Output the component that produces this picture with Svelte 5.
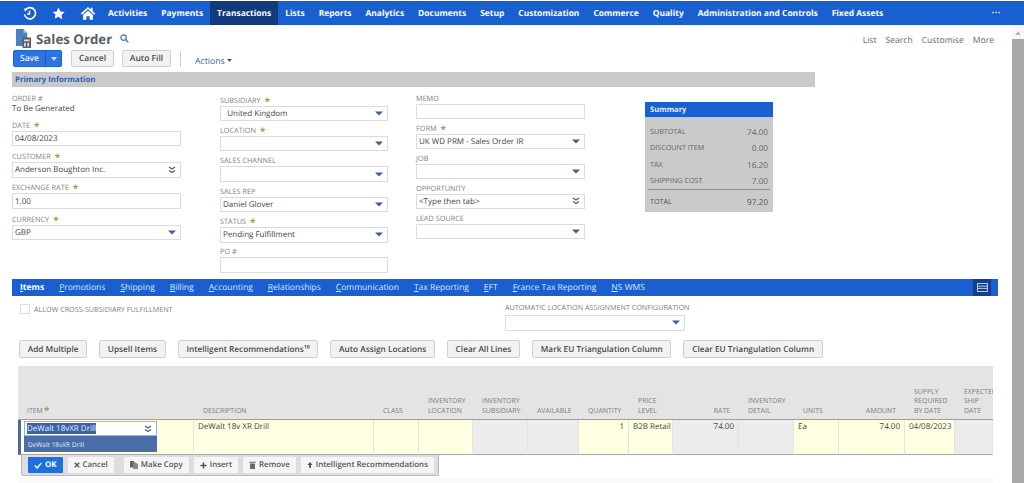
<script lang="ts">
  const navItems = ["Activities", "Payments", "Transactions", "Lists", "Reports", "Analytics", "Documents", "Setup", "Customization", "Commerce", "Quality", "Administration and Controls", "Fixed Assets"];
  const tabs = ["Items", "Promotions", "Shipping", "Billing", "Accounting", "Relationships", "Communication", "Tax Reporting", "EFT", "France Tax Reporting", "NS WMS"];
  const lineButtons = ["Add Multiple", "Upsell Items", "Intelligent Recommendations¹⁰", "Auto Assign Locations", "Clear All Lines", "Mark EU Triangulation Column", "Clear EU Triangulation Column"];

  type Field = { label: string; req?: boolean; value?: string; kind: "text" | "select" | "lookup" | "static" };

  const columns: { cls: string; fields: Field[] }[] = [
    {
      cls: "col-a",
      fields: [
        { label: "Order #", value: "To Be Generated", kind: "static" },
        { label: "Date", req: true, value: "04/08/2023", kind: "text" },
        { label: "Customer", req: true, value: "Anderson Boughton Inc.", kind: "lookup" },
        { label: "Exchange Rate", req: true, value: "1.00", kind: "text" },
        { label: "Currency", req: true, value: "GBP", kind: "select" }
      ]
    },
    {
      cls: "col-b",
      fields: [
        { label: "Subsidiary", req: true, value: "  United Kingdom", kind: "select" },
        { label: "Location", req: true, kind: "select" },
        { label: "Sales Channel", kind: "select" },
        { label: "Sales Rep", value: "Daniel Glover", kind: "select" },
        { label: "Status", req: true, value: "Pending Fulfillment", kind: "select" },
        { label: "PO #", kind: "text" }
      ]
    },
    {
      cls: "col-c",
      fields: [
        { label: "Memo", kind: "text" },
        { label: "Form", req: true, value: "UK WD PRM - Sales Order IR", kind: "select" },
        { label: "Job", kind: "select" },
        { label: "Opportunity", value: "<Type then tab>", kind: "lookup" },
        { label: "Lead Source", kind: "select" }
      ]
    }
  ];

  const summary = [
    ["Subtotal", "74.00"],
    ["Discount Item", "0.00"],
    ["Tax", "16.20"],
    ["Shipping Cost", "7.00"]
  ];

  const cols = [
    { head: ["Item"], req: true, cell: "", kind: "edit" },
    { head: ["Description"], cell: "DeWalt 18v XR Drill", kind: "edit" },
    { head: ["Class"], cell: "", kind: "edit" },
    { head: ["Inventory", "Location"], cell: "", kind: "edit" },
    { head: ["Inventory", "Subsidiary"], cell: "", kind: "off" },
    { head: ["Available"], cell: "", kind: "off" },
    { head: ["Quantity"], cell: "1", kind: "edit", right: true, headLeft: true },
    { head: ["Price", "Level"], cell: "B2B Retail", kind: "edit" },
    { head: ["Rate"], cell: "74.00", kind: "off", right: true },
    { head: ["Inventory", "Detail"], cell: "", kind: "off" },
    { head: ["Units"], cell: "Ea", kind: "edit" },
    { head: ["Amount"], cell: "74.00", kind: "edit", right: true },
    { head: ["Supply", "Required", "By Date"], cell: "04/08/2023", kind: "edit" },
    { head: ["Expected", "Ship", "Date"], cell: "", kind: "off" }
  ];
</script>

{#snippet caret()}
  <svg class="caret" viewBox="0 0 8 5" width="8" height="5"><path d="M0 0.5h8L4 4.5z" fill="#3f5f93" /></svg>
{/snippet}

{#snippet lookup()}
  <svg class="lookup" viewBox="0 0 8 8" width="8" height="8"><path d="M1 1l3 2 3-2M1 4.5l3 2 3-2" fill="none" stroke="#4a6288" stroke-width="1.4" /></svg>
{/snippet}

<div class="page">
  <nav class="topnav">
    <div class="nav-icons">
      <svg viewBox="0 0 16 16" width="15" height="15"><path d="M4.2 3.5A6 6 0 1 1 2.6 9" fill="none" stroke="#fff" stroke-width="1.7" /><path d="M1.8 2.6l4.2.3-2.4 3.2z" fill="#fff" /><path d="M8 4.8V8.6H5.4" fill="none" stroke="#fff" stroke-width="1.5" /></svg>
      <svg viewBox="0 0 16 16" width="13" height="13"><path d="M8 .6l2.3 4.9 5.2.7-3.8 3.7.9 5.4L8 12l-4.6 2.3.9-5.4L.5 6.2l5.2-.7z" fill="#fff" /></svg>
      <svg viewBox="0 0 18 16" width="16" height="15"><path d="M9 .8L.8 8l1.2 1.3L9 3.3l7 6 1.2-1.3-3-2.6V1.5h-2.2v2z" fill="#fff" /><path d="M3.5 9.5L9 4.8l5.5 4.7V15h-3.7v-4H7.2v4H3.5z" fill="#fff" /></svg>
    </div>
    {#each navItems as item}
      <a class="nav-item" class:active={item === "Transactions"} href="#top">{item}</a>
    {/each}
    <span class="nav-more">•••</span>
  </nav>

  <div class="shell">
    <main class="content">
      <header class="title-row">
        <div class="title">
          <svg viewBox="0 0 18 20" width="17" height="19">
            <path d="M1 0h8l4 4v14H1z" fill="#4d7fc0" />
            <path d="M9 0l4 4H9z" fill="#a9c4e6" />
            <rect x="8" y="9" width="9" height="11" fill="#55585c" />
            <rect x="9.5" y="11" width="6" height="2" fill="#d8d8d8" />
            <rect x="9.5" y="14.5" width="2" height="4" fill="#d8d8d8" />
            <rect x="13" y="14.5" width="2" height="4" fill="#d8d8d8" />
          </svg>
          <h1>Sales Order</h1>
          <svg viewBox="0 0 10 10" width="9" height="9"><circle cx="4" cy="4" r="3" fill="none" stroke="#3f6fb5" stroke-width="1.3" /><path d="M6.2 6.2L9.3 9.3" stroke="#3f6fb5" stroke-width="1.5" /></svg>
        </div>
        <div class="page-links"><span>List</span><span>Search</span><span>Customise</span><span>More</span></div>
      </header>

      <div class="toolbar">
        <div class="save">
          <span class="save-main">Save</span>
          <span class="save-drop"><svg viewBox="0 0 6 4" width="6" height="4"><path d="M0 0h6L3 4z" fill="#cfe0fa" /></svg></span>
        </div>
        <button class="btn" type="button">Cancel</button>
        <button class="btn" type="button">Auto Fill</button>
        <span class="tool-sep"></span>
        <span class="actions">Actions<svg viewBox="0 0 6 4" width="5" height="3"><path d="M0 0h6L3 4z" fill="#445" /></svg></span>
      </div>

      <div class="section-bar">Primary Information</div>

      <section class="form">
        {#each columns as col}
          <div class="form-col {col.cls}">
            {#each col.fields as f}
              <div class="field">
                <div class="label">{f.label}{#if f.req}<span class="req">*</span>{/if}</div>
                {#if f.kind === "static"}
                  <div class="static">{f.value}</div>
                {:else}
                  <div class="control">
                    <span class="value">{f.value ?? ""}</span>
                    {#if f.kind === "select"}{@render caret()}{/if}
                    {#if f.kind === "lookup"}{@render lookup()}{/if}
                  </div>
                {/if}
              </div>
            {/each}
          </div>
        {/each}

        <aside class="summary">
          <div class="summary-head">Summary</div>
          <div class="summary-body">
            {#each summary as [k, v]}
              <div class="summary-row"><span>{k}</span><span class="num">{v}</span></div>
            {/each}
            <div class="summary-row total"><span>Total</span><span class="num">97.20</span></div>
          </div>
        </aside>
      </section>

      <div class="tabbar">
        <div class="tabs">
          {#each tabs as tab, i}
            <span class="tab" class:current={i === 0}><u>{tab[0]}</u>{tab.slice(1)}</span>
          {/each}
        </div>
        <span class="tab-toggle">
          <svg viewBox="0 0 12 10" width="11" height="9"><rect x=".5" y=".5" width="11" height="9" fill="none" stroke="#cfd8ea" /><path d="M.5 3.5h11M.5 6h11" stroke="#cfd8ea" /></svg>
        </span>
      </div>

      <div class="options">
        <label class="check"><span class="box"></span><span class="check-text">Allow Cross-Subsidiary Fulfillment</span></label>
        <div class="auto-config">
          <div class="label">Automatic Location Assignment Configuration</div>
          <div class="control"><span class="value"></span>{@render caret()}</div>
        </div>
      </div>

      <div class="line-buttons">
        {#each lineButtons as b}
          <button class="btn" type="button">{b}</button>
        {/each}
      </div>

      <section class="machine">
        <div class="grid">
          {#each cols as c}
            <div class="th" class:right={c.right && !c.headLeft}>
              {#each c.head as h}<span>{h}</span>{/each}
              {#if c.req}<span class="req th-req">*</span>{/if}
            </div>
          {/each}
          {#each cols as c, i}
            <div class="td {c.kind}" class:right={c.right} class:first={i === 0}>
              {#if i === 0}
                <div class="item-picker">
                  <div class="item-input"><span class="selected">DeWalt 18vXR Drill</span>{@render lookup()}</div>
                  <div class="item-option">DeWalt 18vXR Drill</div>
                </div>
              {:else}
                {c.cell}
              {/if}
            </div>
          {/each}
        </div>

        <div class="row-actions">
          <span class="ok"><svg viewBox="0 0 10 8" width="8" height="7"><path d="M1 4l3 3 5-6" fill="none" stroke="#fff" stroke-width="1.8" /></svg>OK</span>
          <span class="row-btn"><svg viewBox="0 0 8 8" width="6" height="6"><path d="M1 1l6 6M7 1L1 7" stroke="#555" stroke-width="1.8" /></svg>Cancel</span>
          <span class="row-sep"></span>
          <span class="row-btn"><svg viewBox="0 0 10 10" width="8" height="8"><path d="M0 0h5v2h2v6H0z" fill="#666" /><path d="M4 3h6v7H4z" fill="#888" /></svg>Make Copy</span>
          <span class="row-btn"><svg viewBox="0 0 8 8" width="7" height="7"><path d="M4 .5v7M.5 4h7" stroke="#555" stroke-width="1.7" /></svg>Insert</span>
          <span class="row-btn"><svg viewBox="0 0 8 10" width="7" height="8"><path d="M0 1h8v1.2H0zM1 3h6v7H1z" fill="#666" /></svg>Remove</span>
          <span class="row-btn"><svg viewBox="0 0 8 8" width="6" height="6"><path d="M4 0l3.5 4H5.2v4H2.8V4H.5z" fill="#555" /></svg>Intelligent Recommendations</span>
        </div>
        <div class="machine-foot"></div>
      </section>
    </main>

    <div class="scrollbar">
      <svg viewBox="0 0 8 5" width="6" height="4"><path d="M4 0l4 5H0z" fill="#b5b5b5" /></svg>
      <div class="thumb"></div>
    </div>
  </div>
</div>

<style>
  :global(body) {
    margin: 0;
    background: #fff;
  }

  .page {
    width: 1024px;
    height: 483px;
    overflow: hidden;
    display: flex;
    flex-direction: column;
    font-family: "Open Sans", "Liberation Sans", sans-serif;
    text-rendering: geometricPrecision;
    color: #3f3f3f;
    font-size: 8px;
  }

  .topnav {
    height: 24px;
    margin-top: 1px;
    flex: none;
    display: flex;
    align-items: stretch;
    background: #1a5fd0;
  }

  .nav-icons {
    width: 101px;
    padding-left: 22px;
    box-sizing: border-box;
    display: flex;
    align-items: center;
    gap: 15px;
  }

  .nav-item {
    padding: 0 7px;
    display: flex;
    align-items: center;
    color: #fff;
    text-decoration: none;
    font-weight: 700;
    font-size: 8.45px;
    white-space: nowrap;
  }

  .nav-item.active {
    background: #123a7c;
  }

  .nav-more {
    margin-left: auto;
    margin-right: 23px;
    align-self: center;
    color: #dfe8f8;
    font-size: 7px;
    letter-spacing: 0.5px;
  }

  .shell {
    flex: 1;
    min-height: 0;
    display: flex;
  }

  .content {
    width: 1012px;
    flex: none;
  }

  .scrollbar {
    flex: 1;
    display: flex;
    flex-direction: column;
    align-items: center;
    padding-top: 6px;
    gap: 4px;
    background: #f8f8f8;
  }

  .thumb {
    width: 100%;
    flex: 1;
    background: #a8a8a8;
  }

  .title-row {
    display: flex;
    justify-content: space-between;
    height: 25px;
    padding: 4px 18px 0 15px;
    box-sizing: border-box;
  }

  .title {
    display: flex;
    align-items: center;
    gap: 4px;
    height: 19px;
  }

  h1 {
    margin: 0 4px 0 0;
    font-size: 13.3px;
    font-weight: 700;
    color: #5b5f66;
  }

  .page-links {
    display: flex;
    gap: 9px;
    padding-top: 5px;
    font-size: 8.6px;
    color: #666;
  }

  .toolbar {
    height: 17px;
    padding-left: 13px;
    display: flex;
    align-items: stretch;
  }

  .save {
    width: 49px;
    display: flex;
    border: 1px solid #1e62cc;
    box-sizing: border-box;
    border-radius: 2px;
    background: #2c74e2;
    color: #e7f0ff;
    font-weight: 600;
    font-size: 8.5px;
    margin-right: 9px;
  }

  .save-main {
    flex: 1;
    display: flex;
    align-items: center;
    justify-content: center;
  }

  .save-drop {
    width: 15px;
    display: flex;
    align-items: center;
    justify-content: center;
    border-left: 1px solid #195ac0;
  }

  .btn {
    appearance: none;
    box-sizing: border-box;
    border: 1px solid #cfcfcf;
    border-radius: 2px;
    background: #f2f2f2;
    color: #4a4a4a;
    font: 600 8.25px "Open Sans", "Liberation Sans", sans-serif;
    text-rendering: geometricPrecision;
    padding: 0;
    white-space: nowrap;
  }

  .toolbar .btn {
    width: 43px;
    margin-right: 8px;
    font-size: 8.5px;
  }

  .toolbar .btn + .btn {
    width: 49px;
  }

  .tool-sep {
    width: 1px;
    margin: 1px 14px 0 1px;
    background: #ccc;
  }

  .actions {
    display: flex;
    align-items: center;
    gap: 2px;
    padding-top: 4px;
    color: #3a5f92;
    font-size: 8.7px;
  }

  .section-bar {
    margin: 5px 0 0 12px;
    width: 803px;
    height: 15px;
    padding-left: 3px;
    box-sizing: border-box;
    display: flex;
    align-items: center;
    background: #c9c9c9;
    color: #2a62b8;
    font-weight: 700;
    font-size: 7.8px;
  }

  .form {
    height: 192px;
    position: relative;
    display: flex;
    padding-left: 12px;
  }

  .form-col {
    display: flex;
    flex-direction: column;
  }

  .col-a {
    width: 169px;
    margin-top: 5.5px;
    gap: 4.9px;
  }

  .col-b {
    width: 168px;
    margin: 7.5px 0 0 39px;
    gap: 3.9px;
  }

  .col-c {
    width: 169px;
    margin: 5.5px 0 0 28px;
    gap: 3.5px;
  }

  .label {
    height: 11px;
    padding-top: 1px;
    box-sizing: border-box;
    display: flex;
    align-items: center;
    gap: 4px;
    font-size: 7.3px;
    color: #808080;
    text-transform: uppercase;
    white-space: nowrap;
  }

  .req {
    color: #a89a55;
    font-size: 10px;
    line-height: 8px;
    font-weight: 700;
  }

  .static {
    height: 10px;
    line-height: 10px;
    margin: 0.5px 0 0.8px;
    color: #444;
  }

  .control {
    height: 15.5px;
    box-sizing: border-box;
    border: 1px solid #dcdcdc;
    display: flex;
    align-items: center;
    justify-content: space-between;
    padding: 0 4px 0 2px;
    color: #444;
    background: #fff;
  }

  .value {
    white-space: pre;
  }

  .summary {
    position: absolute;
    left: 645px;
    top: 15px;
    width: 128px;
    background: #cacaca;
    height: 110px;
  }

  .summary-head {
    height: 15px;
    padding-left: 5px;
    display: flex;
    align-items: center;
    background: #1a5fd0;
    color: #e8f0ff;
    font-weight: 700;
    font-size: 7.6px;
  }

  .summary-body {
    padding: 7px 5px 0;
  }

  .summary-row {
    height: 16.3px;
    display: flex;
    justify-content: space-between;
    align-items: center;
    color: #666;
    text-transform: uppercase;
    font-size: 7.2px;
  }

  .summary-row .num {
    font-size: 8.2px;
    padding-top: 1px;
  }

  .summary-row.total {
    border-top: 1px solid #8e8e8e;
    margin: 0 -2px;
    padding: 0 2px;
    height: 24px;
    color: #555;
  }

  .summary-row.total .num {
    padding: 0;
  }

  .tabbar {
    margin-left: 12px;
    width: 986px;
    height: 17px;
    display: flex;
    justify-content: space-between;
    background: #1a5fd0;
  }

  .tabs {
    display: flex;
    align-items: center;
    gap: 15px;
    padding-left: 8px;
  }

  .tab {
    color: #dbe6fa;
    font-size: 8.5px;
    white-space: nowrap;
  }

  .tab.current {
    color: #fff;
    font-weight: 700;
  }

  .tab-toggle {
    width: 18px;
    margin-right: 7px;
    display: flex;
    align-items: center;
    justify-content: center;
    background: #123f90;
  }

  .options {
    position: relative;
    height: 44px;
    padding: 6px 0 0 20px;
    box-sizing: border-box;
  }

  .check {
    display: flex;
    align-items: center;
    gap: 4px;
    font-size: 7.2px;
    color: #808080;
    text-transform: uppercase;
  }

  .check-text {
    padding-top: 3px;
  }

  .box {
    width: 10px;
    height: 10px;
    box-sizing: border-box;
    border: 1px solid #ddd;
  }

  .auto-config {
    position: absolute;
    left: 505px;
    top: 6px;
    width: 180px;
  }

  .auto-config .label {
    height: 11px;
    margin: 0 0 2px;
    font-size: 7.2px;
  }

  .line-buttons {
    height: 18px;
    padding-left: 19px;
    display: flex;
    gap: 12px;
  }

  .line-buttons .btn {
    padding: 0 7.7px;
  }

  .machine {
    margin: 8px 0 0 18px;
    width: 975px;
  }

  .grid {
    display: grid;
    grid-template-columns: 176px 180px 45px 54px 55px 51px 50px 44px 66px 55px 45px 66px 50px 38px;
    grid-template-rows: 54px 35px;
    width: 975px;
    overflow: hidden;
  }

  .th {
    background: #e4e4e4;
    border-bottom: 1px solid #9aa0a6;
    padding: 0 3px 3px 9px;
    display: flex;
    flex-direction: column;
    justify-content: flex-end;
    font-size: 6.9px;
    line-height: 9.5px;
    color: #808080;
    text-transform: uppercase;
    position: relative;
    white-space: nowrap;
    overflow: hidden;
  }

  .th.right {
    align-items: flex-end;
    padding: 0 9px 3px 2px;
  }

  .th-req {
    position: absolute;
    left: 26px;
    bottom: 5px;
  }

  .td {
    border-right: 1px solid #e6e6d8;
    border-bottom: 1px solid #a5a8ac;
    padding: 1px 4px;
    color: #444;
    line-height: 11px;
    position: relative;
    white-space: nowrap;
  }

  .td.edit {
    background: #ffffe2;
  }

  .td.off {
    background: #ececec;
  }

  .td.right {
    text-align: right;
  }

  .td.first {
    border-left: 3px solid #4a6a9e;
    padding: 0;
  }

  .item-picker {
    position: absolute;
    left: 3px;
    top: 1px;
    width: 133px;
    background: #4a6fa8;
  }

  .item-input {
    height: 15px;
    box-sizing: border-box;
    background: #fff;
    border: 1px solid #8fb4e6;
    padding: 0 4px 0 2px;
    display: flex;
    align-items: center;
    justify-content: space-between;
  }

  .selected {
    background: #3a62a8;
    color: #e6eefc;
    font-size: 8px;
  }

  .item-option {
    height: 16px;
    padding-left: 4px;
    display: flex;
    align-items: center;
    color: #e2eafa;
    font-size: 6.5px;
  }

  .row-actions {
    margin-left: 3px;
    width: 418px;
    height: 21px;
    padding: 2px 6px;
    box-sizing: border-box;
    display: flex;
    gap: 5px;
    background: #dedede;
    border: 1px solid #bbb;
    border-top: 0;
    border-radius: 0 0 2px 2px;
  }

  .ok,
  .row-btn {
    display: flex;
    align-items: center;
    justify-content: center;
    gap: 3px;
    padding: 0 6px;
    border-radius: 1px;
    font-size: 7.9px;
    font-weight: 600;
    color: #555;
    background: #f5f5f5;
    white-space: nowrap;
  }

  .ok {
    background: #1f6fe0;
    color: #fff;
    font-weight: 700;
  }

  .row-sep {
    width: 1px;
    background: #c0c0c0;
  }

  .machine-foot {
    height: 8px;
    margin-top: 2px;
    background: #fafafa;
  }
</style>
